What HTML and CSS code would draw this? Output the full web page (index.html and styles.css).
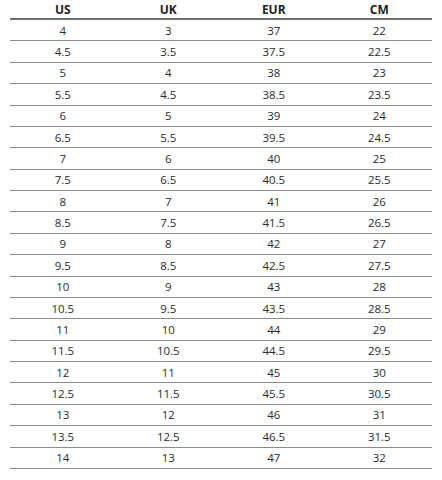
FILE: index.html
```html
<!DOCTYPE html>
<html>
<head>
<meta charset="utf-8">
<link rel="stylesheet" href="styles.css">
</head>
<body>
<table class="sizes">
<thead>
<tr><th>US</th><th>UK</th><th>EUR</th><th>CM</th></tr>
</thead>
<tbody>
<tr><td>4</td><td>3</td><td>37</td><td>22</td></tr>
<tr><td>4.5</td><td>3.5</td><td>37.5</td><td>22.5</td></tr>
<tr><td>5</td><td>4</td><td>38</td><td>23</td></tr>
<tr><td>5.5</td><td>4.5</td><td>38.5</td><td>23.5</td></tr>
<tr><td>6</td><td>5</td><td>39</td><td>24</td></tr>
<tr><td>6.5</td><td>5.5</td><td>39.5</td><td>24.5</td></tr>
<tr><td>7</td><td>6</td><td>40</td><td>25</td></tr>
<tr><td>7.5</td><td>6.5</td><td>40.5</td><td>25.5</td></tr>
<tr><td>8</td><td>7</td><td>41</td><td>26</td></tr>
<tr><td>8.5</td><td>7.5</td><td>41.5</td><td>26.5</td></tr>
<tr><td>9</td><td>8</td><td>42</td><td>27</td></tr>
<tr><td>9.5</td><td>8.5</td><td>42.5</td><td>27.5</td></tr>
<tr><td>10</td><td>9</td><td>43</td><td>28</td></tr>
<tr><td>10.5</td><td>9.5</td><td>43.5</td><td>28.5</td></tr>
<tr><td>11</td><td>10</td><td>44</td><td>29</td></tr>
<tr><td>11.5</td><td>10.5</td><td>44.5</td><td>29.5</td></tr>
<tr><td>12</td><td>11</td><td>45</td><td>30</td></tr>
<tr><td>12.5</td><td>11.5</td><td>45.5</td><td>30.5</td></tr>
<tr><td>13</td><td>12</td><td>46</td><td>31</td></tr>
<tr><td>13.5</td><td>12.5</td><td>46.5</td><td>31.5</td></tr>
<tr><td>14</td><td>13</td><td>47</td><td>32</td></tr>
</tbody>
</table>
</body>
</html>
```

FILE: styles.css
```css
html, body {
  margin: 0;
  padding: 0;
  background: #ffffff;
}
.sizes {
  margin: 0 0 0 10px;
  width: 422px;
  border-collapse: collapse;
  table-layout: fixed;
  font-family: "Open Sans", "Noto Sans", sans-serif;
  font-size: 11.5px;
  color: #2b2b2b;
}
.sizes th {
  height: 18px;
  padding: 0;
  font-weight: 700;
  font-size: 12px;
  text-align: center;
  vertical-align: middle;
  color: #1e1e1e;
  border-bottom: 2px solid #6e6e6e;
}
.sizes td {
  height: 20.38px;
  padding: 0;
  text-align: center;
  vertical-align: middle;
  border-bottom: 1px solid #8c8c8c;
}
```
